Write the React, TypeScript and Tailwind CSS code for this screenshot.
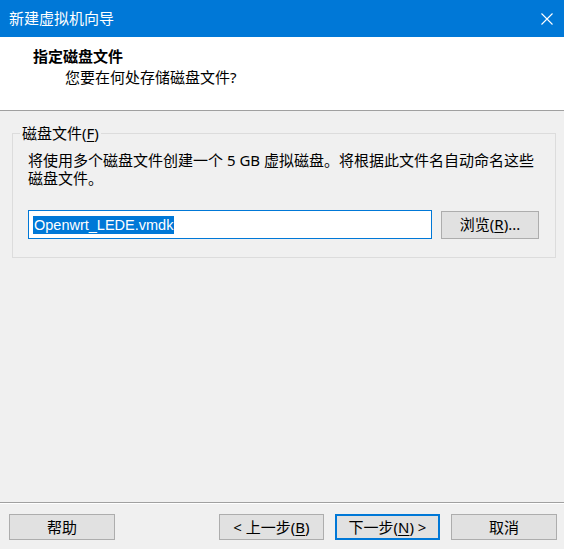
import React from "react";

const font = { fontFamily: '"Noto Sans", "Noto Sans CJK SC", sans-serif' };

function U({ c }: { c: string }) {
  return <span className="underline underline-offset-[2px] decoration-[1px]">{c}</span>;
}

function Btn({ children, primary, w }: { children: React.ReactNode; primary?: boolean; w: string }) {
  return (
    <div
      className={
        "h-[26px] flex items-center justify-center bg-[#e1e1e1] text-[15px] text-black leading-none " +
        w +
        (primary ? " border-2 border-[#0078d7]" : " border border-[#adadad]")
      }
    >
      {children}
    </div>
  );
}

export default function App() {
  return (
    <div className="w-[564px] h-[549px] bg-[#f0f0f0] flex flex-col overflow-hidden" style={font}>
      {/* Title bar */}
      <div className="h-[37px] bg-[#0078d7] flex items-center justify-between pl-[9px] pr-[11px] text-white text-[15px] shrink-0">
        <span className="leading-none">新建虚拟机向导</span>
        <svg width="12" height="12" viewBox="0 0 12 12" className="block">
          <path d="M0.5 0.5 L11.5 11.5 M11.5 0.5 L0.5 11.5" stroke="#ffffff" strokeWidth="1.1" fill="none" />
        </svg>
      </div>

      {/* Header */}
      <div className="h-[74px] bg-white border-b border-[#a0a0a0] pt-[9px] pl-[33px] shrink-0">
        <div className="text-[15px] font-bold leading-[20px] text-black">指定磁盘文件</div>
        <div className="text-[15px] leading-[22px] text-black pl-[32px]">您要在何处存储磁盘文件?</div>
      </div>

      {/* Content */}
      <div className="flex-1 pt-[12px] pl-[12px]">
        <fieldset className="border border-[#dcdcdc] w-[544px] p-0">
          <legend className="ml-[7px] px-[2px] text-[15px] leading-[20px] text-black">
            磁盘文件(<U c="F" />)
          </legend>
          <div className="pl-[15px] pr-[15px] pb-[18px]">
            <div className="pt-[8px] text-[15px] leading-[18px] text-black">
              <div>将使用多个磁盘文件创建一个 5 GB 虚拟磁盘。将根据此文件名自动命名这些</div>
              <div>磁盘文件。</div>
            </div>
            <div className="mt-[23px] flex items-center gap-[9px]">
              <div className="w-[404px] h-[29px] bg-white border border-[#0078d7] flex items-center pl-[4px]">
                <span
                  className="bg-[#0078d7] text-white text-[14.5px] leading-[18px] h-[18px] px-[1px]"
                  style={{ fontFamily: '"Liberation Sans", sans-serif' }}
                >
                  Openwrt_LEDE.vmdk
                </span>
              </div>
              <div className="w-[98px] h-[28px] bg-[#e1e1e1] border border-[#adadad] flex items-center justify-center text-[15px] text-black leading-none">
                浏览(<U c="R" />)...
              </div>
            </div>
          </div>
        </fieldset>
      </div>

      {/* Footer */}
      <div className="shrink-0 border-t border-[#a0a0a0]">
        <div className="border-t border-white pt-[10px] pb-[9px] pl-[9px] pr-[7px] flex items-center justify-between">
          <Btn w="w-[106px]">帮助</Btn>
          <div className="flex items-center gap-[11px]">
            <Btn w="w-[105px]">
              &lt; 上一步(<U c="B" />)
            </Btn>
            <Btn w="w-[105px]" primary>
              下一步(<U c="N" />) &gt;
            </Btn>
            <Btn w="w-[106px]">取消</Btn>
          </div>
        </div>
      </div>
    </div>
  );
}
